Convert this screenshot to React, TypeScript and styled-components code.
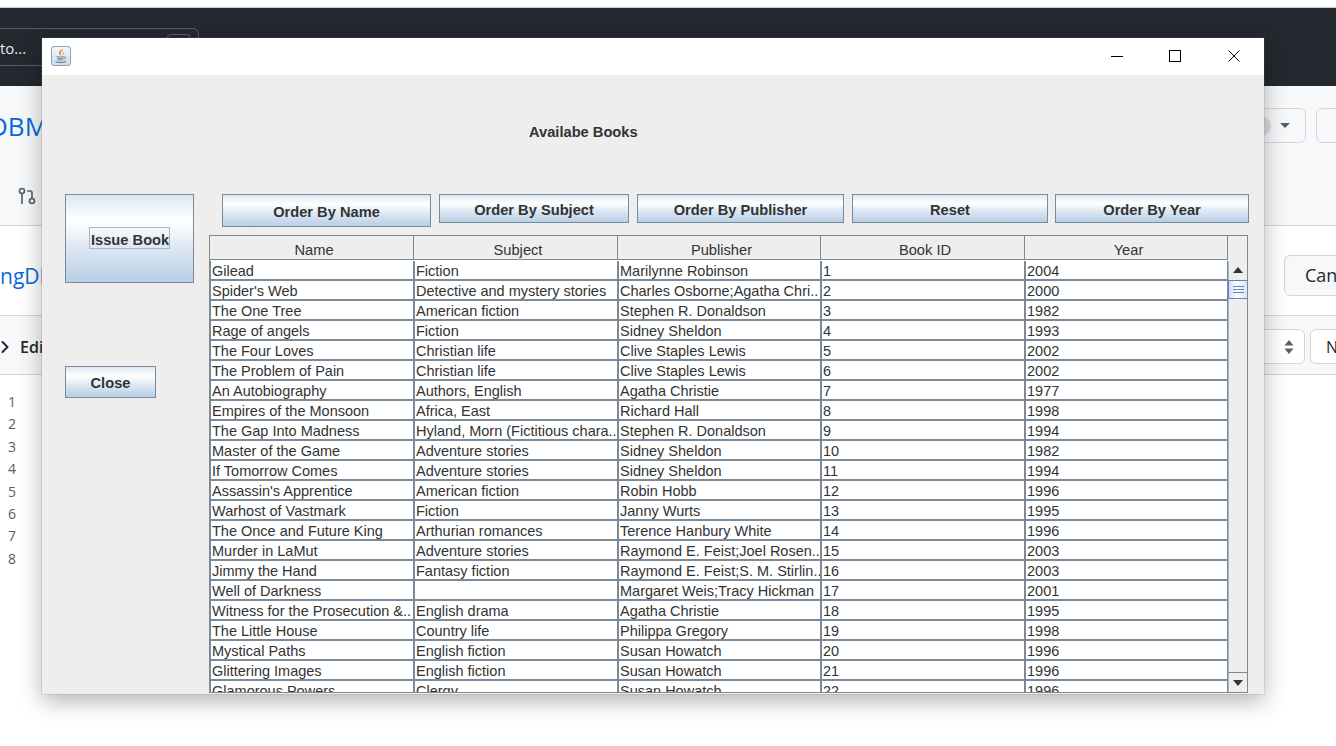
import React from "react";
import styled, { createGlobalStyle } from "styled-components";
import { GitPullRequest, ChevronRight } from "lucide-react";

const GlobalStyle = createGlobalStyle`
  html, body {
    margin: 0;
    padding: 0;
    height: 100%;
    overflow: hidden;
    background: #ffffff;
  }
`;

const books: string[][] = [
  ["Gilead", "Fiction", "Marilynne Robinson", "1", "2004"],
  ["Spider's Web", "Detective and mystery stories", "Charles Osborne;Agatha Chri..", "2", "2000"],
  ["The One Tree", "American fiction", "Stephen R. Donaldson", "3", "1982"],
  ["Rage of angels", "Fiction", "Sidney Sheldon", "4", "1993"],
  ["The Four Loves", "Christian life", "Clive Staples Lewis", "5", "2002"],
  ["The Problem of Pain", "Christian life", "Clive Staples Lewis", "6", "2002"],
  ["An Autobiography", "Authors, English", "Agatha Christie", "7", "1977"],
  ["Empires of the Monsoon", "Africa, East", "Richard Hall", "8", "1998"],
  ["The Gap Into Madness", "Hyland, Morn (Fictitious chara..", "Stephen R. Donaldson", "9", "1994"],
  ["Master of the Game", "Adventure stories", "Sidney Sheldon", "10", "1982"],
  ["If Tomorrow Comes", "Adventure stories", "Sidney Sheldon", "11", "1994"],
  ["Assassin's Apprentice", "American fiction", "Robin Hobb", "12", "1996"],
  ["Warhost of Vastmark", "Fiction", "Janny Wurts", "13", "1995"],
  ["The Once and Future King", "Arthurian romances", "Terence Hanbury White", "14", "1996"],
  ["Murder in LaMut", "Adventure stories", "Raymond E. Feist;Joel Rosen..", "15", "2003"],
  ["Jimmy the Hand", "Fantasy fiction", "Raymond E. Feist;S. M. Stirlin..", "16", "2003"],
  ["Well of Darkness", "", "Margaret Weis;Tracy Hickman", "17", "2001"],
  ["Witness for the Prosecution &..", "English drama", "Agatha Christie", "18", "1995"],
  ["The Little House", "Country life", "Philippa Gregory", "19", "1998"],
  ["Mystical Paths", "English fiction", "Susan Howatch", "20", "1996"],
  ["Glittering Images", "English fiction", "Susan Howatch", "21", "1996"],
  ["Glamorous Powers", "Clergy", "Susan Howatch", "22", "1996"],
];

const columns = ["Name", "Subject", "Publisher", "Book ID", "Year"];
const orderButtons = [
  { label: "Order By Name", width: 209, tall: true },
  { label: "Order By Subject", width: 190 },
  { label: "Order By Publisher", width: 207 },
  { label: "Reset", width: 196 },
  { label: "Order By Year", width: 194 },
];

const steel = "#7a8a99";
const colTemplate = "204px 204px 203px 204px 203px";

/* browser page behind the dialog */
const Page = styled.div`
  position: relative;
  width: 1336px;
  height: 746px;
  overflow: hidden;
  background: #ffffff;
  font-family: "Open Sans", "Noto Sans", sans-serif;
`;

const TopGap = styled.div`
  height: 7px;
  background: #ffffff;
  border-bottom: 1px solid #c9c9c9;
`;

const DarkBar = styled.div`
  height: 78px;
  box-sizing: border-box;
  padding-top: 20px;
  background: #24292f;
`;

const SearchBox = styled.div`
  display: flex;
  align-items: center;
  justify-content: space-between;
  box-sizing: border-box;
  width: 209px;
  height: 38px;
  margin-left: -10px;
  padding: 2px 7px 0 9px;
  border: 1px solid #57606a;
  border-radius: 6px;
  color: #e6e8ea;
  font-size: 15px;
`;

const KeyHint = styled.span`
  align-self: flex-start;
  width: 22px;
  height: 20px;
  margin-top: 3px;
  border: 1px solid #57606a;
  border-radius: 4px;
`;

const RepoHead = styled.div`
  height: 140px;
  box-sizing: border-box;
  padding-top: 21px;
  background: #f6f8fa;
  border-bottom: 1px solid #d0d7de;
`;

const HeadRow = styled.div`
  display: flex;
  align-items: flex-start;
  justify-content: space-between;
`;

const BlueTitle = styled.span<{ $size: number; $shift: number }>`
  margin-left: ${(p) => p.$shift}px;
  color: #0969da;
  font-size: ${(p) => p.$size}px;
  line-height: 38px;
  font-weight: 500;
`;

const HeadActions = styled.div`
  display: flex;
  gap: 10px;
  margin-right: -60px;
  margin-top: 1px;
`;

const GhostButton = styled.div<{ $width: number }>`
  display: flex;
  align-items: center;
  justify-content: flex-end;
  gap: 9px;
  box-sizing: border-box;
  width: ${(p) => p.$width}px;
  height: 35px;
  padding-right: 15px;
  border: 1px solid #d0d7de;
  border-radius: 6px;
  background: #f6f8fa;
`;

const Avatar = styled.span`
  width: 20px;
  height: 20px;
  border-radius: 50%;
  background: #d8dbdf;
`;

const Caret = styled.span`
  width: 0;
  height: 0;
  border-left: 5px solid transparent;
  border-right: 5px solid transparent;
  border-top: 5px solid #57606a;
`;

const TabIcon = styled.div`
  margin: 41px 0 0 17px;
  color: #57606a;
`;

const BranchRow = styled.div`
  display: flex;
  align-items: center;
  justify-content: space-between;
  height: 90px;
  box-sizing: border-box;
  padding-top: 10px;
  background: #ffffff;
  border-bottom: 1px solid #d0d7de;
`;

const CancelButton = styled.div`
  box-sizing: border-box;
  width: 90px;
  height: 41px;
  margin-right: -38px;
  padding: 6px 0 0 20px;
  border: 1px solid #d0d7de;
  border-radius: 6px;
  background: #f6f8fa;
  color: #24292f;
  font-size: 18px;
  line-height: 26px;
  font-weight: 500;
`;

const EditorBar = styled.div`
  display: flex;
  align-items: center;
  justify-content: space-between;
  height: 59px;
  box-sizing: border-box;
  padding-top: 3px;
  background: #f6f8fa;
  border-bottom: 1px solid #d0d7de;
`;

const EditLabel = styled.div`
  display: flex;
  align-items: center;
  gap: 5px;
  margin-left: -5px;
  color: #24292f;
  font-size: 16px;
  font-weight: 600;
`;

const EditorTools = styled.div`
  display: flex;
  gap: 5px;
  margin-right: -34px;
`;

const SmallTool = styled.div<{ $width: number }>`
  display: flex;
  align-items: center;
  justify-content: flex-end;
  box-sizing: border-box;
  width: ${(p) => p.$width}px;
  height: 35px;
  padding-right: 10px;
  border: 1px solid #d0d7de;
  border-radius: 6px;
  background: #ffffff;
`;

const NLabel = styled.span`
  margin-right: auto;
  padding-left: 15px;
  color: #24292f;
  font-size: 16px;
`;

const LineNumbers = styled.ol`
  margin: 16px 0 0;
  padding: 0 0 0 8px;
  list-style: none;
  color: #57606a;
  font-size: 14px;
  line-height: 22.4px;
`;

/* the Swing dialog */
const Dialog = styled.div`
  position: absolute;
  left: 42px;
  top: 38px;
  display: flex;
  flex-direction: column;
  width: 1222px;
  height: 656px;
  background: #eeeeee;
  box-shadow: 0 0 0 1px rgba(120, 120, 120, 0.15), 0 7px 22px rgba(0, 0, 0, 0.3);
  font-family: "Liberation Sans", Arial, sans-serif;
  color: #333333;
`;

const TitleBar = styled.div`
  display: flex;
  align-items: center;
  justify-content: space-between;
  flex: none;
  height: 37px;
  background: #ffffff;
`;

const AppIcon = styled.svg`
  margin-left: 9px;
  margin-top: -1px;
`;

const WindowControls = styled.div`
  display: flex;
  margin-right: 1px;
  margin-top: -2px;
`;

const WindowControl = styled.button`
  display: flex;
  align-items: center;
  justify-content: center;
  width: 58.5px;
  height: 37px;
  padding: 0;
  border: 0;
  background: transparent;
`;

const Heading = styled.div`
  flex: none;
  box-sizing: border-box;
  height: 119px;
  padding: 48px 0 0 487px;
  font-size: 14.67px;
  line-height: 18px;
  font-weight: 700;
`;

const Body = styled.div`
  display: flex;
  gap: 15px;
  flex: 1;
  min-height: 0;
  padding-left: 23px;
`;

const SideColumn = styled.div`
  display: flex;
  flex-direction: column;
  align-items: flex-start;
  gap: 83px;
  width: 129px;
`;

const MetalButton = styled.button<{ $w: number; $h: number }>`
  display: flex;
  align-items: center;
  justify-content: center;
  flex: none;
  box-sizing: border-box;
  width: ${(p) => p.$w}px;
  height: ${(p) => p.$h}px;
  padding: 2px 0 0;
  border: 1px solid ${steel};
  background: linear-gradient(#dde8f3 0%, #ffffff 30%, #dde8f3 60%, #b8cfe5 100%);
  color: #333333;
  font-family: "Liberation Sans", Arial, sans-serif;
  font-size: 14.67px;
  font-weight: 700;
`;

const FocusLabel = styled.span`
  box-sizing: border-box;
  height: 22px;
  width: 81px;
  margin-top: -4px;
  padding-left: 1px;
  overflow: hidden;
  border: 1px solid #a3b8cc;
  line-height: 24px;
  text-align: left;
  white-space: nowrap;
`;

const MainColumn = styled.div`
  display: flex;
  flex-direction: column;
  gap: 8px;
  width: 1040px;
  min-height: 0;
  flex: 1;
`;

const ButtonRow = styled.div`
  display: flex;
  align-items: flex-start;
  gap: 8px;
  height: 33px;
  padding-left: 13px;
  flex: none;

  & > :last-child {
    margin-left: -1px;
  }
`;

const TableFrame = styled.div`
  display: flex;
  box-sizing: border-box;
  width: 1039px;
  height: 458px;
  flex: none;
  border: 1px solid ${steel};
`;

const TableArea = styled.div`
  width: 1018px;
  overflow: hidden;
`;

const HeaderRow = styled.div`
  display: grid;
  grid-template-columns: ${colTemplate};
  grid-template-rows: 24px;
  height: 25px;
  box-sizing: border-box;
  background: #ffffff;
`;

const HeaderCell = styled.div`
  padding-left: 5px;
  border-right: 1px solid ${steel};
  border-bottom: 1px solid ${steel};
  background: #eeeeee;
  font-size: 14.67px;
  line-height: 28px;
  text-align: center;
`;

const Row = styled.div`
  display: grid;
  grid-template-columns: ${colTemplate};
  grid-template-rows: 18px;
  height: 20px;
  box-sizing: border-box;
  background: #ffffff;
  border-bottom: 2px solid ${steel};
`;

const Cell = styled.div`
  overflow-x: clip;
  padding-left: 1px;
  border-left: 1px solid ${steel};
  border-right: 1px solid ${steel};
  font-size: 14.5px;
  line-height: 21px;
  white-space: nowrap;
`;

const ScrollBar = styled.div`
  display: flex;
  flex-direction: column;
  width: 19px;
  background: #eeeeee;
`;

const ScrollCorner = styled.div`
  flex: none;
  height: 25px;
`;

const ScrollArrow = styled.div`
  display: flex;
  align-items: center;
  justify-content: center;
  flex: none;
  height: 19px;
  box-sizing: border-box;
  background: #eeeeee;
  border-left: 1px solid #a3b8cc;
`;

const ScrollThumb = styled.div`
  display: flex;
  flex-direction: column;
  align-items: center;
  justify-content: center;
  gap: 2px;
  flex: none;
  height: 19px;
  box-sizing: border-box;
  border-top: 1px solid #6382bf;
  border-bottom: 1px solid #6382bf;
  border-left: 1px solid #6382bf;
  background: linear-gradient(90deg, #c8ddf2 0%, #ffffff 40%, #d8e6f4 100%);
`;

const GripLine = styled.span`
  width: 11px;
  height: 1px;
  background: #6382bf;
`;

const ScrollTrack = styled.div`
  flex: 1;
  border-left: 1px solid #a3b8cc;
`;

const Triangle = styled.span<{ $down?: boolean }>`
  width: 0;
  height: 0;
  border-left: 5.5px solid transparent;
  border-right: 5.5px solid transparent;
  ${(p) => (p.$down ? "border-top: 6px solid #333333;" : "border-bottom: 6px solid #333333; margin-top: -2px;")}
`;

const DownArrow = styled(ScrollArrow)`
  height: 20px;
  border-top: 1px solid ${steel};
`;

const JavaIcon = () => (
  <AppIcon width="20" height="20" viewBox="0 0 20 20">
    <defs>
      <linearGradient id="javaBg" x1="0" y1="0" x2="0" y2="1">
        <stop offset="0" stopColor="#f4f7fa" />
        <stop offset="1" stopColor="#cfdbe6" />
      </linearGradient>
    </defs>
    <rect x="0.5" y="0.5" width="19" height="19" rx="2.5" fill="url(#javaBg)" stroke="#8ea4b8" />
    <path d="M11.5 2.5c.8 2.2-2.8 3.4-2 5.6.2.6.7 1.2.8 1.7-1.3-.8-2.9-2-2.2-3.8.6-1.5 3.4-1.9 3.4-3.5z" fill="#e2711d" />
    <path d="M13 5.2c-1.5.7-2.2 1.5-1.6 2.5.3.5.6.9.5 1.5.9-.6.9-1.4.5-2-.4-.6 0-1.2.6-2z" fill="#eb9a33" />
    <path d="M5.5 10.6c1.6.5 6 .5 7.8 0M6 12.2c1.5.4 5 .4 6.6 0M6.4 13.8c1.4.3 4.2.3 5.6 0" stroke="#5f7f9e" strokeWidth="0.9" fill="none" />
    <path d="M13.3 10.8c2 -.4 2.2 1.8 -.5 2.5" stroke="#5f7f9e" strokeWidth="0.8" fill="none" />
    <path d="M4.5 15.6c2.5 1.2 8 1.2 10.5 0" stroke="#4d6e8e" strokeWidth="1" fill="none" />
  </AppIcon>
);

export default function App() {
  return (
    <Page>
      <GlobalStyle />
      <TopGap />
      <DarkBar>
        <SearchBox>
          to...
          <KeyHint />
        </SearchBox>
      </DarkBar>
      <RepoHead>
        <HeadRow>
          <BlueTitle $size={26} $shift={-11}>DBMS</BlueTitle>
          <HeadActions>
            <GhostButton $width={90}>
              <Avatar />
              <Caret />
            </GhostButton>
            <GhostButton $width={80} />
          </HeadActions>
        </HeadRow>
        <TabIcon>
          <GitPullRequest size={20} strokeWidth={2} />
        </TabIcon>
      </RepoHead>
      <BranchRow>
        <BlueTitle $size={21} $shift={0}>ngDB</BlueTitle>
        <CancelButton>Cancel</CancelButton>
      </BranchRow>
      <EditorBar>
        <EditLabel>
          <ChevronRight size={20} strokeWidth={2.4} />
          Edit
        </EditLabel>
        <EditorTools>
          <SmallTool $width={60}>
            <svg width="10" height="14" viewBox="0 0 10 14">
              <path d="M5 0l4.5 5.5h-9zM5 14L.5 8.5h9z" fill="#57606a" />
            </svg>
          </SmallTool>
          <SmallTool $width={60}>
            <NLabel>N</NLabel>
          </SmallTool>
        </EditorTools>
      </EditorBar>
      <LineNumbers>
        {[1, 2, 3, 4, 5, 6, 7, 8].map((n) => (
          <li key={n}>{n}</li>
        ))}
      </LineNumbers>

      <Dialog>
        <TitleBar>
          <JavaIcon />
          <WindowControls>
            <WindowControl aria-label="Minimize">
              <svg width="12" height="12" viewBox="0 0 12 12">
                <path d="M0 6.5h12" stroke="#000" strokeWidth="1" />
              </svg>
            </WindowControl>
            <WindowControl aria-label="Maximize">
              <svg width="12" height="12" viewBox="0 0 12 12">
                <rect x="0.5" y="0.5" width="11" height="11" fill="none" stroke="#000" />
              </svg>
            </WindowControl>
            <WindowControl aria-label="Close">
              <svg width="12" height="12" viewBox="0 0 12 12">
                <path d="M0.5 0.5l11 11M11.5 0.5l-11 11" stroke="#000" strokeWidth="1" />
              </svg>
            </WindowControl>
          </WindowControls>
        </TitleBar>
        <Heading>Availabe Books</Heading>
        <Body>
          <SideColumn>
            <MetalButton $w={129} $h={89}>
              <FocusLabel>Issue Book</FocusLabel>
            </MetalButton>
            <MetalButton $w={91} $h={32}>Close</MetalButton>
          </SideColumn>
          <MainColumn>
            <ButtonRow>
              {orderButtons.map((b) => (
                <MetalButton key={b.label} $w={b.width} $h={b.tall ? 33 : 29}>
                  {b.label}
                </MetalButton>
              ))}
            </ButtonRow>
            <TableFrame>
              <TableArea>
                <HeaderRow>
                  {columns.map((c) => (
                    <HeaderCell key={c}>{c}</HeaderCell>
                  ))}
                </HeaderRow>
                {books.map((book) => (
                  <Row key={book[3]}>
                    {book.map((value, i) => (
                      <Cell key={i}>{value}</Cell>
                    ))}
                  </Row>
                ))}
              </TableArea>
              <ScrollBar>
                <ScrollCorner />
                <ScrollArrow>
                  <Triangle />
                </ScrollArrow>
                <ScrollThumb>
                  <GripLine />
                  <GripLine />
                  <GripLine />
                </ScrollThumb>
                <ScrollTrack />
                <DownArrow>
                  <Triangle $down />
                </DownArrow>
              </ScrollBar>
            </TableFrame>
          </MainColumn>
        </Body>
      </Dialog>
    </Page>
  );
}
